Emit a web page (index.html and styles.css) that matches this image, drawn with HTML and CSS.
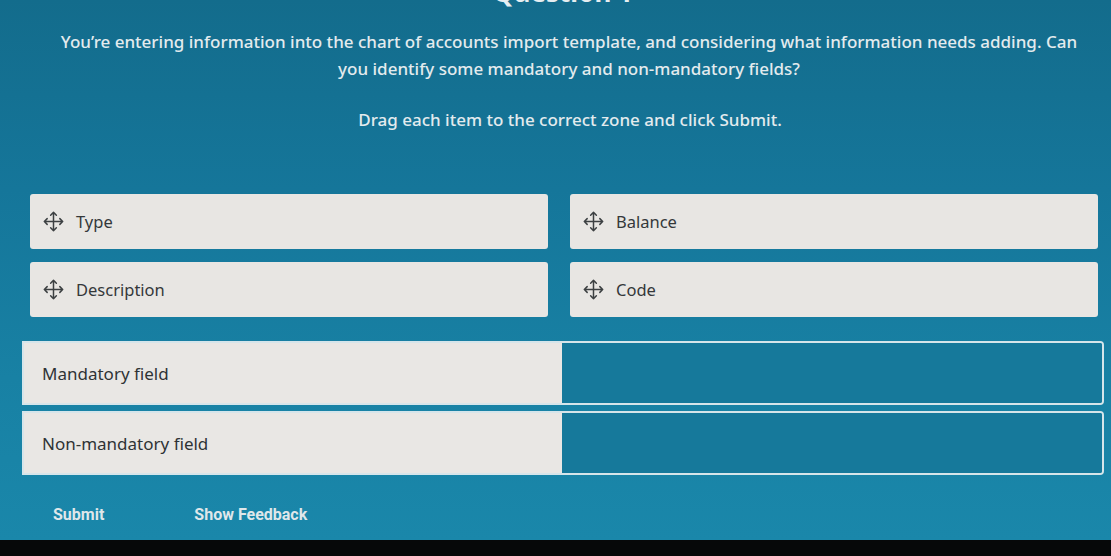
FILE: index.html
```html
<!DOCTYPE html>
<html lang="en">
<head>
<meta charset="utf-8">
<title>Question 1</title>
<link rel="stylesheet" href="styles.css">
</head>
<body>
<div class="page">
  <main class="question">
    <h1 class="title">Question 1</h1>
    <p class="prompt">You’re entering information into the chart of accounts import template, and considering what information needs adding. Can<br>you identify some mandatory and non-mandatory fields?</p>
    <p class="instruction">Drag each item to the correct zone and click Submit.</p>

    <div class="items">
      <div class="item"><svg class="move" viewBox="0 0 20 20"><path d="M10 2v16M2 10h16M7.5 4.5L10 2l2.5 2.5M7.5 15.5L10 18l2.5-2.5M4.5 7.5L2 10l2.5 2.5M15.5 7.5L18 10l-2.5 2.5"/></svg><span>Type</span></div>
      <div class="item"><svg class="move" viewBox="0 0 20 20"><path d="M10 2v16M2 10h16M7.5 4.5L10 2l2.5 2.5M7.5 15.5L10 18l2.5-2.5M4.5 7.5L2 10l2.5 2.5M15.5 7.5L18 10l-2.5 2.5"/></svg><span>Balance</span></div>
      <div class="item"><svg class="move" viewBox="0 0 20 20"><path d="M10 2v16M2 10h16M7.5 4.5L10 2l2.5 2.5M7.5 15.5L10 18l2.5-2.5M4.5 7.5L2 10l2.5 2.5M15.5 7.5L18 10l-2.5 2.5"/></svg><span>Description</span></div>
      <div class="item"><svg class="move" viewBox="0 0 20 20"><path d="M10 2v16M2 10h16M7.5 4.5L10 2l2.5 2.5M7.5 15.5L10 18l2.5-2.5M4.5 7.5L2 10l2.5 2.5M15.5 7.5L18 10l-2.5 2.5"/></svg><span>Code</span></div>
    </div>

    <div class="zones">
      <div class="zone">
        <div class="zone-label">Mandatory ﬁeld</div>
        <div class="zone-drop"></div>
      </div>
      <div class="zone">
        <div class="zone-label">Non-mandatory ﬁeld</div>
        <div class="zone-drop"></div>
      </div>
    </div>

    <div class="actions">
      <button class="btn btn-submit" type="button">Submit</button>
      <button class="btn" type="button">Show Feedback</button>
    </div>
  </main>
  <div class="bezel"></div>
</div>
</body>
</html>
```
FILE: styles.css
```css
* { box-sizing: border-box; }
html, body { margin: 0; padding: 0; }
body {
  width: 1111px;
  height: 556px;
  overflow: hidden;
  background: #050708;
  font-family: "Noto Sans", "Open Sans", sans-serif;
}
.page {
  display: flex;
  flex-direction: column;
  height: 556px;
}
.question {
  height: 540px;
  overflow: hidden;
  background: linear-gradient(180deg, #136c8c 0%, #15769a 35%, #1881a4 70%, #1a87aa 100%);
  color: #e3ebee;
  padding: 0 7px 0 22px;
}
.title {
  margin: -23px 0 0;
  height: 30px;
  line-height: 30px;
  font-size: 26px;
  font-weight: 700;
  text-align: center;
  color: #e6eef1;
}
.prompt {
  margin: 21px 0 0;
  font-size: 17px;
  font-weight: 500;
  line-height: 27px;
  text-align: center;
  padding-left: 12px;
}
.instruction {
  margin: 24px 0 0;
  font-size: 17px;
  font-weight: 500;
  line-height: 27px;
  text-align: center;
  padding-left: 14px;
}
.items {
  margin: 61px 6px 0 8px;
  display: grid;
  grid-template-columns: 518px 1fr;
  column-gap: 22px;
  row-gap: 13px;
}
.item {
  height: 55px;
  background: #e8e6e3;
  border-radius: 3px;
  display: flex;
  align-items: center;
  gap: 11px;
  padding: 0 12px;
  color: #34383a;
  font-size: 16.5px;
}
.move {
  width: 23px;
  height: 23px;
  fill: none;
  stroke: #3c4042;
  stroke-width: 1.3;
  stroke-linecap: round;
  stroke-linejoin: round;
  flex: none;
}
.zones {
  margin-top: 24px;
  display: flex;
  flex-direction: column;
  gap: 6px;
}
.zone {
  height: 64px;
  display: flex;
  border: 2px solid #d6e5ea;
  border-radius: 0 4px 4px 0;
  overflow: hidden;
}
.zone-label {
  width: 538px;
  background: #e9e7e4;
  color: #2f3335;
  font-size: 17px;
  display: flex;
  align-items: center;
  padding-left: 18px;
}
.zone-drop {
  flex: 1;
  background: #16799b;
}
.actions {
  margin-top: 27px;
  display: flex;
  gap: 66px;
  padding-left: 19px;
}
.btn {
  background: none;
  border: 0;
  padding: 0 12px;
  height: 24px;
  font-family: "Roboto", "Liberation Sans", sans-serif;
  font-weight: 700;
  font-size: 16px;
  color: #dfe7ea;
  cursor: pointer;
}
.bezel {
  flex: 1;
  background: #060809;
}
```
